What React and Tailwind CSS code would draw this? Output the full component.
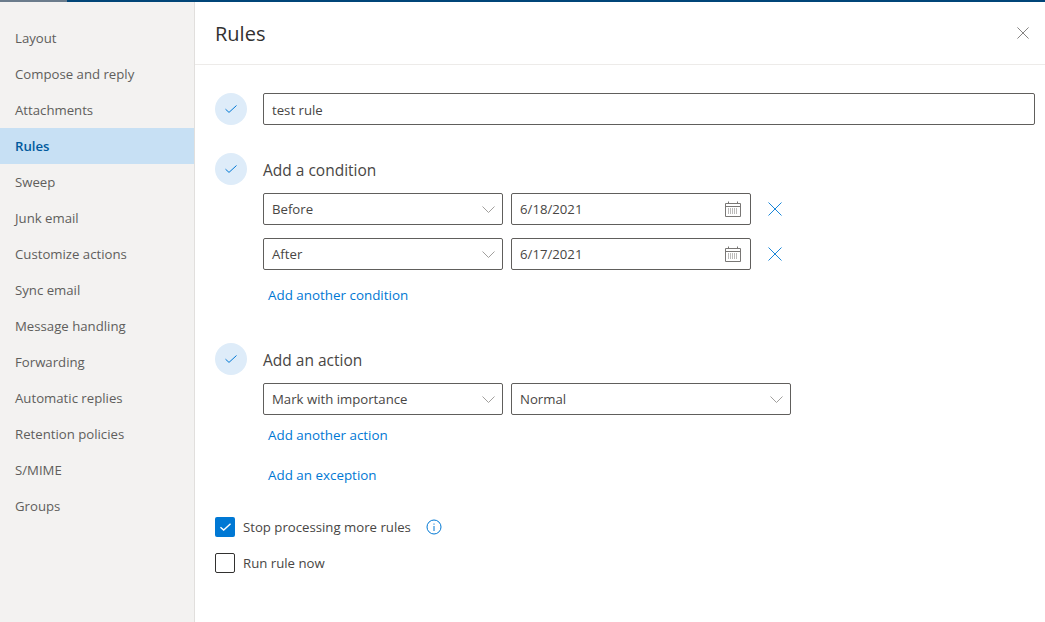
import { useState } from 'react';

const navItems = [
  'Layout',
  'Compose and reply',
  'Attachments',
  'Rules',
  'Sweep',
  'Junk email',
  'Customize actions',
  'Sync email',
  'Message handling',
  'Forwarding',
  'Automatic replies',
  'Retention policies',
  'S/MIME',
  'Groups',
];

function CheckMark({ width, height, stroke, strokeWidth = 1 }) {
  return (
    <svg width={width} height={height} viewBox="0 0 12 8" fill="none" stroke={stroke} strokeWidth={strokeWidth}>
      <path d="M0.5 4.2 L4 7.4 L11.5 0.5" />
    </svg>
  );
}

function CrossIcon({ size, stroke }) {
  return (
    <svg width={size} height={size} viewBox="0 0 14 14" fill="none" stroke={stroke} strokeWidth="0.9" className="shrink-0">
      <path d="M0.5 0.5 L13.5 13.5 M13.5 0.5 L0.5 13.5" />
    </svg>
  );
}

function StepCheck() {
  return (
    <div className="flex h-8 w-8 shrink-0 items-center justify-center rounded-full bg-[#deecf9]">
      <CheckMark width={12} height={8} stroke="#0078d4" />
    </div>
  );
}

function Select({ label, width }) {
  return (
    <div className={`flex h-8 items-center justify-between rounded-[2px] border border-[#605e5c] pl-2 pr-[7px] ${width}`}>
      <span className="pt-[2px]">{label}</span>
      <svg width="13" height="7" viewBox="0 0 13 7" fill="none" stroke="#a19f9d">
        <path d="M0.5 0.5 L6.5 6.5 L12.5 0.5" />
      </svg>
    </div>
  );
}

function CalendarIcon() {
  return (
    <svg width="18" height="18" viewBox="0 0 18 18" fill="none" stroke="#797775" strokeWidth="1">
      <path d="M1.5 3.5h15v13h-15z" />
      <path d="M1.5 6.5h15M4.5 1.5v2M13.5 1.5v2" />
      <path d="M4 9h10M4 11h10M4 13h10" strokeDasharray="1 1" />
    </svg>
  );
}

function DateRow({ type, date }) {
  return (
    <div className="flex h-8 items-center gap-2">
      <Select label={type} width="w-[240px]" />
      <div className="flex h-8 w-[240px] items-center justify-between rounded-[2px] border border-[#605e5c] pl-2 pr-[8px]">
        <span className="pt-[2px]">{date}</span>
        <CalendarIcon />
      </div>
      <div className="ml-[9px]">
        <CrossIcon size={14} stroke="#0078d4" />
      </div>
    </div>
  );
}

function StepHeading({ title }) {
  return (
    <div className="flex items-center gap-4">
      <StepCheck />
      <span className="pt-1 text-[15.5px] text-[#484644]">{title}</span>
    </div>
  );
}

export default function App() {
  const [stopProcessing] = useState(true);

  return (
    <div className="flex h-[622px] w-[1045px] flex-col overflow-hidden bg-white font-['Open_Sans',sans-serif] text-[13.2px] text-[#484644]">
      <div className="flex h-[2px] shrink-0">
        <div className="w-[67px] bg-[#6b7c8c]" />
        <div className="flex-1 bg-[#004578]" />
      </div>

      <div className="flex flex-1">
        <nav className="w-[195px] shrink-0 border-r border-[#e1dfdd] bg-[#f3f2f1] pt-[18px]">
          {navItems.map((item) => (
            <div
              key={item}
              className={`flex h-9 items-center pl-[15px] pt-[2px] ${
                item === 'Rules' ? 'bg-[#c7e0f4] font-semibold text-[#005a9e]' : 'text-[#605e5c]'
              }`}
            >
              {item}
            </div>
          ))}
        </nav>

        <main className="flex-1">
          <header className="flex h-[63px] items-center justify-between border-b border-[#edebe9] pl-5 pr-4">
            <h1 className="pt-[2px] text-xl font-medium text-[#323130]">Rules</h1>
            <CrossIcon size={12} stroke="#605e5c" />
          </header>

          <div className="pl-5 pr-[10px] pt-7">
            <div className="flex items-center gap-4">
              <StepCheck />
              <div className="flex h-8 flex-1 items-center rounded-[2px] border border-[#605e5c] pl-2 pt-[3px]">test rule</div>
            </div>

            <div className="mt-7">
              <StepHeading title="Add a condition" />
              <div className="ml-12 mt-2 flex flex-col gap-[13px]">
                <DateRow type="Before" date="6/18/2021" />
                <DateRow type="After" date="6/17/2021" />
              </div>
              <div className="ml-[53px] mt-[15px] text-[13.4px] leading-5 text-[#0078d4]">Add another condition</div>
            </div>

            <div className="mt-[38px]">
              <StepHeading title="Add an action" />
              <div className="ml-12 mt-2 flex gap-2">
                <Select label="Mark with importance" width="w-[240px]" />
                <Select label="Normal" width="w-[280px]" />
              </div>
              <div className="ml-[53px] mt-[10px] text-[13.4px] leading-5 text-[#0078d4]">Add another action</div>
              <div className="ml-[53px] mt-[20px] text-[13.4px] leading-5 text-[#0078d4]">Add an exception</div>
            </div>

            <div className="mt-8 flex flex-col gap-4">
              <div className="flex h-5 items-center gap-2">
                <div className="flex h-5 w-5 items-center justify-center rounded-[2px] bg-[#0078d4]">
                  {stopProcessing && <CheckMark width={11} height={8} stroke="#ffffff" strokeWidth={1.5} />}
                </div>
                <span className="leading-5">Stop processing more rules</span>
                <svg className="ml-[7px]" width="16" height="16" viewBox="0 0 16 16" fill="none" stroke="#0078d4">
                  <circle cx="8" cy="8" r="7" />
                  <path d="M8 7v5M8 4.5v1.2" />
                </svg>
              </div>
              <div className="flex h-5 items-center gap-2">
                <div className="h-5 w-5 rounded-[2px] border border-[#323130]" />
                <span className="leading-5">Run rule now</span>
              </div>
            </div>
          </div>
        </main>
      </div>
    </div>
  );
}
